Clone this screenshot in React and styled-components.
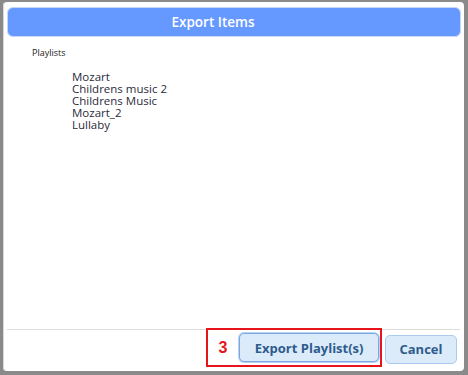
import React from 'react'
import styled, { createGlobalStyle } from 'styled-components'

const GlobalStyle = createGlobalStyle`
  html, body {
    margin: 0;
    padding: 0;
    background: #8a8a8a;
    font-family: "Open Sans", "DejaVu Sans", sans-serif;
  }
`

const Dialog = styled.div`
  margin: 2px 4px 0 3px;
  height: 369px;
  background: #ffffff;
  border-radius: 4px;
  display: flex;
  flex-direction: column;
  box-shadow: inset 1px 0 0 #d8d8d8;
`

const Header = styled.div`
  margin: 5px 3px 0 4px;
  height: 28px;
  background: #6699ff;
  border: 1px solid #c6d6fb;
  border-radius: 6px;
  color: #ffffff;
  font-size: 13.5px;
  font-weight: 600;
  display: flex;
  align-items: center;
  justify-content: center;
  padding-right: 42px;
`

const Body = styled.div`
  flex: 1;
  padding: 10px 0 0 29px;
`

const Label = styled.div`
  font-size: 9px;
  color: #222;
  line-height: 12px;
`

const List = styled.ul`
  list-style: none;
  margin: 12px 0 0 40px;
  padding: 0;
  font-size: 11.5px;
  line-height: 12px;
  color: #2b2b3a;
`

const Footer = styled.div`
  margin: 0 4px;
  border-top: 1px solid #dcdcdc;
  height: 42px;
  box-sizing: border-box;
  padding: 0 3px 3px 0;
  display: flex;
  align-items: center;
  justify-content: flex-end;
  gap: 3px;
`

const Marker = styled.div`
  align-self: flex-start;
  margin-top: -2px;
  height: 39px;
  box-sizing: border-box;
  border: 2px solid #e8141b;
  display: flex;
  align-items: center;
  padding: 0 1px 0 10px;
  gap: 12px;
`

const Step = styled.span`
  color: #e8141b;
  font-weight: 700;
  font-size: 16px;
  font-family: "Liberation Sans", Arial, sans-serif;
`

const Button = styled.button`
  height: 29px;
  padding: 0 ${p => (p.$focus ? 14.5 : 13.5)}px;
  background: #dcebfa;
  border: 1px solid ${p => (p.$focus ? '#7aa6e2' : '#a9cbef')};
  border-radius: 5px;
  color: #2e5c8c;
  font-family: "Open Sans", "DejaVu Sans", sans-serif;
  font-weight: 700;
  font-size: 13px;
  box-shadow: ${p => (p.$focus ? '0 0 0 1px #b8d3f3' : 'none')};
`

const playlists = ['Mozart', 'Childrens music 2', 'Childrens Music', 'Mozart_2', 'Lullaby']

export default function App() {
  return (
    <>
      <GlobalStyle />
      <Dialog>
        <Header>Export Items</Header>
        <Body>
          <Label>Playlists</Label>
          <List>
            {playlists.map(name => (
              <li key={name}>{name}</li>
            ))}
          </List>
        </Body>
        <Footer>
          <Marker>
            <Step>3</Step>
            <Button $focus>Export Playlist(s)</Button>
          </Marker>
          <Button>Cancel</Button>
        </Footer>
      </Dialog>
    </>
  )
}
